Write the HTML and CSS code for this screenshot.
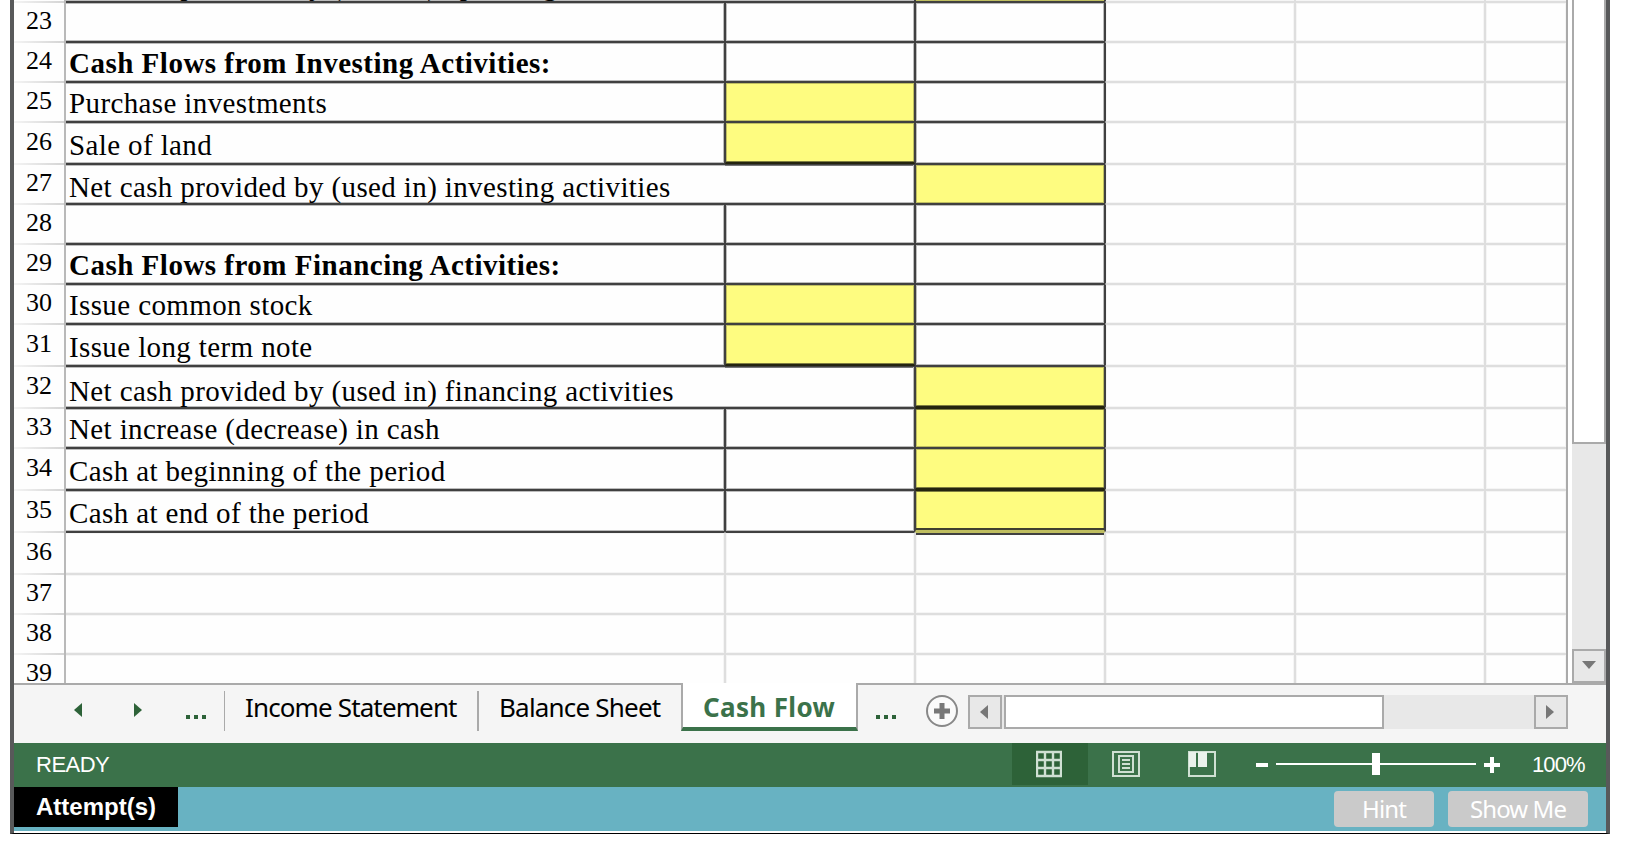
FILE: index.html
```html
<!DOCTYPE html>
<html lang="en">
  <head>
    <meta charset="UTF-8" />
    <meta name="viewport" content="width=device-width, initial-scale=1.0" />
    <title>Cash Flow</title>
    <link rel="stylesheet" href="styles.css">
  </head>
  <body>
    <div class="workbook">
      <div class="main">
        <div class="sheet">
          <div class="row tall first"><div class="num">22</div><div class="cell a merged">Net cash provided by (used in) operating activities</div><div class="cell fill"></div><div class="cell blank next"></div><div class="cell blank"></div><div class="cell blank last"></div></div>
          <div class="row"><div class="num">23</div><div class="cell a"></div><div class="cell"></div><div class="cell"></div><div class="cell blank next"></div><div class="cell blank"></div><div class="cell blank last"></div></div>
          <div class="row"><div class="num">24</div><div class="cell a bold">Cash Flows from Investing Activities:</div><div class="cell"></div><div class="cell"></div><div class="cell blank next"></div><div class="cell blank"></div><div class="cell blank last"></div></div>
          <div class="row"><div class="num">25</div><div class="cell a">Purchase investments</div><div class="cell fill"></div><div class="cell"></div><div class="cell blank next"></div><div class="cell blank"></div><div class="cell blank last"></div></div>
          <div class="row tall"><div class="num">26</div><div class="cell a">Sale of land</div><div class="cell fill thick"></div><div class="cell"></div><div class="cell blank next"></div><div class="cell blank"></div><div class="cell blank last"></div></div>
          <div class="row"><div class="num">27</div><div class="cell a merged under">Net cash provided by (used in) investing activities</div><div class="cell fill"></div><div class="cell blank next"></div><div class="cell blank"></div><div class="cell blank last"></div></div>
          <div class="row"><div class="num">28</div><div class="cell a"></div><div class="cell"></div><div class="cell"></div><div class="cell blank next"></div><div class="cell blank"></div><div class="cell blank last"></div></div>
          <div class="row"><div class="num">29</div><div class="cell a bold">Cash Flows from Financing Activities:</div><div class="cell"></div><div class="cell"></div><div class="cell blank next"></div><div class="cell blank"></div><div class="cell blank last"></div></div>
          <div class="row"><div class="num">30</div><div class="cell a">Issue common stock</div><div class="cell fill"></div><div class="cell"></div><div class="cell blank next"></div><div class="cell blank"></div><div class="cell blank last"></div></div>
          <div class="row tall"><div class="num">31</div><div class="cell a">Issue long term note</div><div class="cell fill thick"></div><div class="cell"></div><div class="cell blank next"></div><div class="cell blank"></div><div class="cell blank last"></div></div>
          <div class="row tall"><div class="num">32</div><div class="cell a merged under">Net cash provided by (used in) financing activities</div><div class="cell fill thick"></div><div class="cell blank next"></div><div class="cell blank"></div><div class="cell blank last"></div></div>
          <div class="row"><div class="num">33</div><div class="cell a">Net increase (decrease) in cash</div><div class="cell"></div><div class="cell fill shade"></div><div class="cell blank next"></div><div class="cell blank"></div><div class="cell blank last"></div></div>
          <div class="row tall"><div class="num">34</div><div class="cell a">Cash at beginning of the period</div><div class="cell"></div><div class="cell fill thick"></div><div class="cell blank next"></div><div class="cell blank"></div><div class="cell blank last"></div></div>
          <div class="row tall"><div class="num">35</div><div class="cell a">Cash at end of the period</div><div class="cell"></div><div class="cell fill double"></div><div class="cell blank next"></div><div class="cell blank"></div><div class="cell blank last"></div></div>
          <div class="row tall"><div class="num">36</div><div class="cell a blank below"></div><div class="cell blank below"></div><div class="cell blank below total"></div><div class="cell blank"></div><div class="cell blank"></div><div class="cell blank last"></div></div>
          <div class="row"><div class="num">37</div><div class="cell a blank"></div><div class="cell blank"></div><div class="cell blank"></div><div class="cell blank"></div><div class="cell blank"></div><div class="cell blank last"></div></div>
          <div class="row"><div class="num">38</div><div class="cell a blank"></div><div class="cell blank"></div><div class="cell blank"></div><div class="cell blank"></div><div class="cell blank"></div><div class="cell blank last"></div></div>
          <div class="row"><div class="num">39</div><div class="cell a blank"></div><div class="cell blank"></div><div class="cell blank"></div><div class="cell blank"></div><div class="cell blank"></div><div class="cell blank last"></div></div>
        </div>
        <div class="vscroll">
          <div class="vthumb"></div>
          <div class="arrow down"><svg width="14" height="8"><path d="M0 0h14l-7 8z" /></svg></div>
        </div>
      </div>

      <div class="tabbar">
        <div class="nav">
          <svg width="8" height="14"><path d="M8 0v14l-8-7z" /></svg>
          <svg width="8" height="14"><path d="M0 0v14l8-7z" /></svg>
          <svg class="dots" width="20" height="4"><path d="M0 0h4v4H0zM8 0h4v4H8zM16 0h4v4h-4z" /></svg>
        </div>
        <div class="tab income"><span>Income Statement</span></div>
        <div class="tab balance"><span>Balance Sheet</span></div>
        <div class="tab active"><span>Cash Flow</span></div>
        <div class="more">
          <svg class="dots" width="20" height="4"><path d="M0 0h4v4H0zM8 0h4v4H8zM16 0h4v4h-4z" /></svg>
        </div>
        <svg class="add" width="32" height="32" viewBox="0 0 32 32">
          <circle cx="16" cy="16" r="15" />
          <path d="M16 8v16M8 16h16" />
        </svg>
        <div class="hscroll">
          <div class="arrow"><svg width="8" height="14"><path d="M8 0v14l-8-7z" /></svg></div>
          <div class="hthumb"></div>
          <div class="arrow right"><svg width="8" height="14"><path d="M0 0v14l8-7z" /></svg></div>
        </div>
      </div>

      <div class="status">
        <span class="ready">READY</span>
        <div class="view on">
          <svg width="26" height="28" viewBox="0 0 26 28"><path d="M1 2h24v24H1zM9 2v24M17 2v24M1 10h24M1 18h24" /></svg>
        </div>
        <div class="view">
          <svg width="28" height="28" viewBox="0 0 28 28"><path d="M1 2h26v24H1zM7 6h14v16H7zM10 10h8M10 14h8M10 18h8" /></svg>
        </div>
        <div class="view">
          <svg width="28" height="28" viewBox="0 0 28 28"><path d="M1 2h26v24H1z" /><path class="solid" d="M1 2h7v15H1zM10 2h9v15h-9z" /></svg>
        </div>
        <div class="zoom">
          <svg width="244" height="22" viewBox="0 0 244 22"><path class="solid" d="M0 10h12v4H0zM20 10h200v2H20zM116 0h8v22h-8zM228 10h16v4h-16zM234 4h4v16h-4z" /></svg>
        </div>
        <span class="percent">100%</span>
      </div>

      <div class="footer">
        <div class="attempts"><span>Attempt(s)</span></div>
        <button class="hint"><span>Hint</span></button>
        <button class="show"><span>Show Me</span></button>
      </div>
    </div>
  </body>
</html>
```

FILE: styles.css
```css
* {
  box-sizing: border-box;
}

body {
  margin: 0;
  background: #fff;
  overflow: hidden;
}

.workbook {
  width: 1600px;
  height: 834px;
  margin-left: 10px;
  border-left: 4px solid #58595a;
  border-right: 4px solid #58595a;
  border-bottom: 1px solid #000;
}

.main {
  display: flex;
  height: 683px;
}

.sheet {
  width: 1554px;
  height: 683px;
  overflow: hidden;
  border-right: 2px solid #aaa;
  font-family: "Liberation Serif", "Times New Roman", serif;
  background: #fefefe;
}

.row {
  display: flex;
  height: 40px;
}

.tall {
  height: 42px;
}

.first {
  margin-top: -40px;
}

.num {
  display: flex;
  align-items: center;
  width: 52px;
  padding: 0 0 2px 12px;
  font-size: 26px;
  border-right: 2px solid #b9b9b9;
  background: linear-gradient(to right, #f4f4f4, #d4d4d4) bottom / 100% 1px no-repeat,
    linear-gradient(to right, #f4f4f4, #d4d4d4) top / 100% 1px no-repeat;
}

.cell {
  display: flex;
  align-items: flex-end;
  width: 190px;
  border: 1px solid #404040;
  box-shadow: inset 0 0 0 1px #bcbcbc;
}

.a {
  width: 659px;
  padding: 0 0 2px 3px;
  border-left: none;
  box-shadow: inset -1px 0 #bcbcbc, inset 0 1px #bcbcbc, inset 0 -1px #bcbcbc;
  font-size: 29px;
  letter-spacing: 0.38px;
  line-height: 32px;
  white-space: nowrap;
}

.bold {
  font-weight: bold;
  letter-spacing: 0.5px;
}

.merged {
  width: 849px;
  padding-bottom: 1px;
  line-height: 30px;
}

/* lower half of the thick line under column B */
.under {
  box-shadow: inset -1px 0 #bcbcbc, inset 0 -1px #bcbcbc;
  background: linear-gradient(#777, #777) right top / 189px 1px no-repeat,
    linear-gradient(#bcbcbc, #bcbcbc) left top / 100% 1px no-repeat;
}

.fill {
  background: #fefc80;
  box-shadow: inset 0 0 0 1px #bfbe60;
}

.thick {
  border-bottom: 2px solid #24240f;
  box-shadow: inset 0 -1px #7f7e40, inset 0 0 0 1px #bfbe60;
}

.shade,
.double {
  border-top-color: #24240f;
  box-shadow: inset 0 1px #7f7e40, inset 0 0 0 1px #bfbe60;
}

.double {
  border-bottom: 2px solid #bfbe60;
  box-shadow: inset 0 1px #7f7e40, inset 0 -2px #404030, inset 0 0 0 1px #bfbe60;
}

.blank {
  border-color: #dedede;
  box-shadow: inset 0 0 0 1px #f5f5f5;
}

.blank.a {
  box-shadow: inset -1px 0 #f5f5f5, inset 0 1px #f5f5f5, inset 0 -1px #f5f5f5;
}

.next {
  border-left-color: #404040;
}

.below {
  border-top-color: #404040;
}

.total {
  border-top: 1px solid #bfbe60;
  box-shadow: inset 0 2px #404040, inset 0 0 0 1px #f5f5f5;
}

.last {
  flex: 1;
  width: auto;
  border-right: none;
}

.vscroll {
  display: flex;
  flex-direction: column;
  justify-content: space-between;
  width: 34px;
  margin-left: 4px;
  background: #e8e8e8;
}

.vthumb {
  height: 444px;
  background: #fff;
  border: 2px solid #aaa;
  border-top: none;
}

.arrow {
  display: flex;
  align-items: center;
  justify-content: center;
  width: 34px;
  height: 34px;
  padding-right: 2px;
  background: #e8e8e8;
  border: 2px solid #aaa;
  fill: #777;
}

.down {
  padding: 0 0 2px;
}

.tabbar {
  display: flex;
  height: 60px;
  background: linear-gradient(#aaa 2px, #f5f5f5 2px);
  font-family: "Noto Sans", sans-serif;
  font-size: 26px;
}

.nav {
  display: flex;
  width: 210px;
  padding: 20px 0 0 60px;
  gap: 52px;
  fill: #2d6238;
}

.dots {
  margin-top: 12px;
  fill: #2d6238;
}

.nav .dots {
  margin-left: -8px;
}

.tab {
  height: 40px;
  margin-top: 8px;
  border-left: 2px solid #aaa;
  line-height: 33px;
  white-space: nowrap;
}

.income {
  width: 253px;
  padding-left: 20px;
  border-left-width: 1px;
  letter-spacing: -0.87px;
}

.balance {
  width: 204px;
  padding-left: 20px;
  letter-spacing: -0.8px;
}

.active {
  width: 177px;
  height: 48px;
  margin-top: 0;
  padding: 8px 0 0 20px;
  background: #fff;
  border-right: 2px solid #aaa;
  border-bottom: 4px solid #3b724a;
  color: #3b724a;
  font-weight: bold;
  letter-spacing: 0.35px;
}

.more {
  width: 68px;
  padding: 20px 0 0 18px;
  line-height: 0;
}

.add {
  margin-top: 12px;
  fill: #fafafa;
  stroke: #888;
  stroke-width: 2;
}

.add path {
  stroke: #777;
  stroke-width: 5;
}

.hscroll {
  display: flex;
  width: 600px;
  height: 34px;
  margin: 12px 0 0 10px;
  background: #e8e8e8;
}

.hthumb {
  width: 380px;
  margin-left: 2px;
  background: #fff;
  border: 2px solid #aaa;
}

.right {
  margin-left: auto;
}

.status {
  display: flex;
  height: 44px;
  background: #3b724a;
  color: #fff;
  font-family: "Liberation Sans", Arial, sans-serif;
  font-size: 22px;
  line-height: 44px;
}

.ready {
  width: 998px;
  padding-left: 22px;
  letter-spacing: -0.5px;
}

.view {
  display: flex;
  justify-content: center;
  align-items: center;
  width: 76px;
  height: 42px;
  fill: none;
  stroke: #cfe0d3;
  stroke-width: 2;
}

.on {
  padding-right: 2px;
  background: #2d6238;
}

.on svg {
  stroke-width: 2.4;
}

.solid {
  fill: #fff;
  stroke: none;
}

.view .solid {
  fill: #eaf2ec;
}

.zoom {
  width: 292px;
  padding: 10px 0 0 16px;
  line-height: 0;
}

.percent {
  letter-spacing: -0.9px;
}

.footer {
  display: flex;
  height: 46px;
  background: linear-gradient(#68b2c2 44px, #fff 44px);
}

.attempts {
  width: 164px;
  height: 40px;
  padding-left: 22px;
  background: #000;
  color: #fff;
  font: bold 24px/40px "Liberation Sans", Arial, sans-serif;
}

.footer button {
  height: 36px;
  margin-top: 4px;
  padding: 0;
  border: none;
  border-radius: 4px;
  background: #cacaca;
  color: #fff;
  font: 24px/36px "Noto Sans", sans-serif;
  letter-spacing: -0.9px;
}

.footer .hint {
  width: 100px;
  margin-left: auto;
}

.footer .show {
  width: 140px;
  margin: 4px 18px 0 14px;
}
```
